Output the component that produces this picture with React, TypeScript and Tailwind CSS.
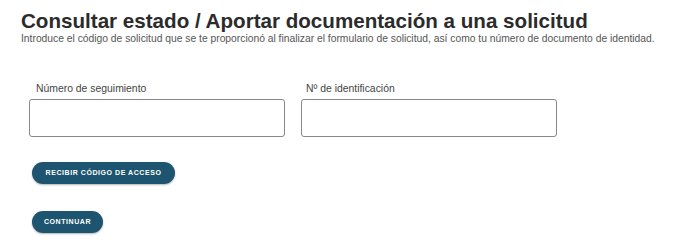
export default function App() {
  return (
    <div className="w-[696px] h-[243px] bg-white font-['Liberation_Sans',Arial,sans-serif] overflow-hidden">
      <div className="pl-[21px] pt-[7px]">
        <h1 className="text-[20.6px] leading-[28px] font-bold text-[#2b2b2b]">
          Consultar estado / Aportar documentación a una solicitud
        </h1>
        <p className="text-[10.3px] leading-[12px] text-[#555] -mt-[2px]">
          Introduce el código de solicitud que se te proporcionó al finalizar el formulario de solicitud, así como tu número de documento de identidad.
        </p>
      </div>

      <div className="flex gap-[16px] pl-[29px] mt-[37px]">
        <div className="flex flex-col">
          <label className="text-[10.4px] leading-[14px] text-[#444] pl-[7px] mb-[3px]">Número de seguimiento</label>
          <input className="w-[256px] h-[38px] border border-[#888] rounded-[3px] bg-white" />
        </div>
        <div className="flex flex-col">
          <label className="text-[10.4px] leading-[14px] text-[#444] pl-[5px] mb-[3px]">Nº de identificación</label>
          <input className="w-[256px] h-[38px] border border-[#888] rounded-[3px] bg-white" />
        </div>
      </div>

      <div className="flex flex-col items-start pl-[32px] mt-[25px] gap-[27px]">
        <button className="h-[22px] w-[143px] rounded-full bg-[#1d5570] text-white text-[7px] font-bold tracking-[0.08em] uppercase shadow-[0_1px_2px_rgba(0,0,0,0.3)]">
          Recibir código de acceso
        </button>
        <button className="h-[22px] w-[71px] rounded-full bg-[#1d5570] text-white text-[7px] font-bold tracking-[0.08em] uppercase shadow-[0_1px_2px_rgba(0,0,0,0.3)]">
          Continuar
        </button>
      </div>
    </div>
  );
}
